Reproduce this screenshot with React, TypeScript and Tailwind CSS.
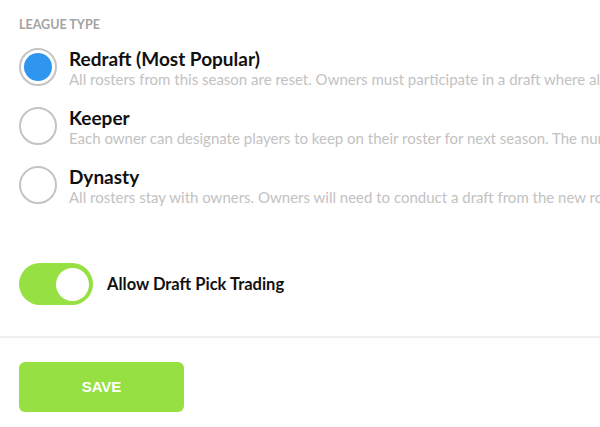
import { useState } from "react";

const leagueTypes = [
  {
    id: "redraft",
    title: "Redraft (Most Popular)",
    description:
      "All rosters from this season are reset. Owners must participate in a draft where all players are available again.",
  },
  {
    id: "keeper",
    title: "Keeper",
    description:
      "Each owner can designate players to keep on their roster for next season. The number of keepers is set by the commissioner.",
  },
  {
    id: "dynasty",
    title: "Dynasty",
    description:
      "All rosters stay with owners. Owners will need to conduct a draft from the new rookie class each season.",
  },
];

export default function App() {
  const [selected, setSelected] = useState("redraft");
  const [trading, setTrading] = useState(true);

  return (
    <div className="h-[427px] w-[600px] overflow-hidden bg-white font-['Lato','Open_Sans',sans-serif]">
      <div className="pl-[19px] pt-[17px]">
        <p className="text-[12.5px] font-bold uppercase leading-[16px] text-[#a3a3a3]">League Type</p>

        <div className="mt-[15px] flex flex-col gap-[18px]">
          {leagueTypes.map((type) => (
            <button
              key={type.id}
              type="button"
              onClick={() => setSelected(type.id)}
              className="flex items-start gap-[12px] text-left"
            >
              <span className="flex h-[38px] w-[38px] shrink-0 items-center justify-center rounded-full border-2 border-[#c4c4c4] bg-white">
                {selected === type.id ? (
                  <span className="h-[28px] w-[28px] rounded-full bg-[#2f96ef]" />
                ) : null}
              </span>
              <span className="min-w-0 flex-1">
                <span className="block text-[19px] font-bold leading-[22px] text-[#111]">{type.title}</span>
                <span className="block whitespace-nowrap text-[15px] leading-[19px] text-[#c2c2c2]">
                  {type.description}
                </span>
              </span>
            </button>
          ))}
        </div>

        <div className="mt-[56px] flex items-center gap-[14px]">
          <button
            type="button"
            onClick={() => setTrading(!trading)}
            className={`flex h-[42px] w-[74px] items-center rounded-full px-[4px] ${
              trading ? "justify-end bg-[#96e044]" : "justify-start bg-[#dcdcdc]"
            }`}
          >
            <span className="h-[33px] w-[33px] rounded-full bg-white" />
          </button>
          <span className="text-[16.5px] font-bold text-[#111]">Allow Draft Pick Trading</span>
        </div>
      </div>

      <div className="mt-[31px] h-[2px] w-full bg-[#efefef]" />

      <div className="px-[19px] pt-[24px]">
        <button
          type="button"
          className="h-[50px] w-[165px] rounded-[6px] bg-[#96e044] font-['Liberation_Sans',Arial,sans-serif] text-[15px] font-bold text-white"
        >
          SAVE
        </button>
      </div>
    </div>
  );
}
